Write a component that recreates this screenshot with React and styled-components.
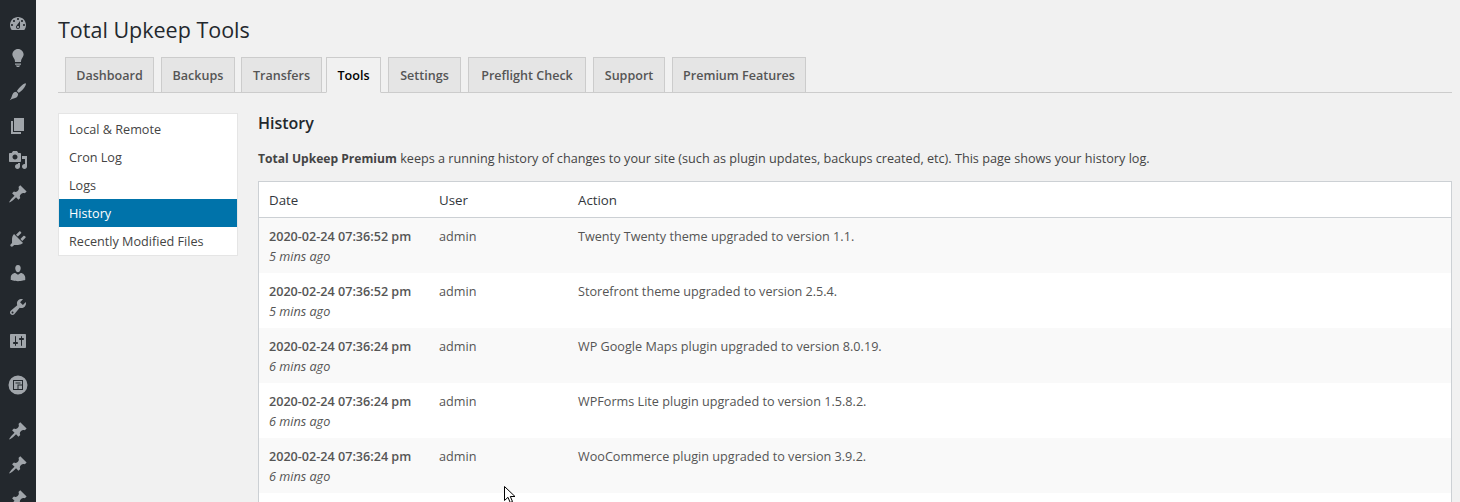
import React from "react";
import styled, { createGlobalStyle } from "styled-components";

const FONT = `"Open Sans", "Noto Sans", "Liberation Sans", sans-serif`;

const Global = createGlobalStyle`
  html, body { margin: 0; padding: 0; height: 502px; overflow: hidden; background: #f1f1f1; }
  body { font-family: ${FONT}; font-size: 12.65px; color: #444; }
  * { box-sizing: border-box; }
`;

const Page = styled.div`
  display: flex;
  width: 1460px;
  height: 502px;
  overflow: hidden;
  position: relative;
`;

const AdminBar = styled.nav`
  flex: none;
  width: 36px;
  height: 502px;
  overflow: hidden;
  background: #23282d;
  padding-top: 7px;
  display: flex;
  flex-direction: column;
  align-items: center;
`;

const MenuIcon = styled.div`
  flex: none;
  height: 34px;
  width: 36px;
  margin-top: ${(p) => p.$gap || 0}px;
  display: flex;
  align-items: center;
  justify-content: center;
  color: #a0a5aa;
  svg { width: 20px; height: 20px; fill: currentColor; display: block; }
`;

const Wrap = styled.main`
  flex: 1;
  min-width: 0;
  padding: 0 8px 0 22px;
`;

const Title = styled.h1`
  margin: 0;
  height: 57px;
  padding-top: 14px;
  font-size: 21.5px;
  line-height: 32px;
  font-weight: 400;
  color: #23282d;
`;

const TabBar = styled.div`
  display: flex;
  height: 36px;
  padding-left: 7px;
  border-bottom: 1px solid #ccc;
`;

const Tab = styled.a`
  flex: none;
  width: ${(p) => p.$w}px;
  margin-right: ${(p) => p.$mr}px;
  display: flex;
  align-items: center;
  justify-content: center;
  padding-top: 1px;
  font-size: 12.55px;
  font-weight: 600;
  border: 1px solid #ccc;
  border-bottom: ${(p) => (p.$active ? "1px solid #f1f1f1" : "none")};
  background: ${(p) => (p.$active ? "#f1f1f1" : "#e5e5e5")};
  color: ${(p) => (p.$active ? "#000" : "#555")};
  height: ${(p) => (p.$active ? "36px" : "35px")};
`;

const Columns = styled.div`
  display: flex;
  gap: 20px;
  padding-top: 20px;
`;

const SideNav = styled.ul`
  flex: none;
  width: 180px;
  height: 143px;
  margin: 0;
  padding: 1px 0 0;
  list-style: none;
  background: #fff;
  border: 1px solid #e5e5e5;
`;

const SideItem = styled.li`
  height: 28px;
  padding-left: 10px;
  line-height: 29px;
  color: ${(p) => (p.$active ? "#fff" : "#444")};
  background: ${(p) => (p.$active ? "#0073aa" : "transparent")};
`;

const Content = styled.section`
  flex: 1;
  min-width: 0;
`;

const Heading = styled.h2`
  margin: 0;
  font-size: 16px;
  line-height: 20px;
  font-weight: 600;
  color: #23282d;
`;

const Intro = styled.p`
  margin: 15px 0 13px;
  line-height: 21px;
  height: 20px;
  strong { font-weight: 700; font-size: 12.1px; }
`;

const Table = styled.table`
  width: 100%;
  border-collapse: separate;
  border-spacing: 0;
  table-layout: fixed;
  background: #fff;
  border: 1px solid #ccd0d4;
`;

const Th = styled.th`
  width: ${(p) => p.$w || "auto"};
  height: 36px;
  padding: 0 10px 0;
  text-align: left;
  font-size: 13.3px;
  font-weight: 400;
  color: #32373c;
  border-bottom: 1px solid #ccd0d4;
`;

const Row = styled.tr`
  background: ${(p) => (p.$alt ? "#f9f9f9" : "#fff")};
`;

const Td = styled.td`
  height: 55px;
  padding: 9px 10px 7px;
  line-height: 19.5px;
  vertical-align: top;
  color: #555;
  strong { font-weight: 600; color: #555; font-size: 12.6px; }
  em { display: block; font-style: italic; color: #555; }
`;

const Cursor = styled.svg`
  position: absolute;
  left: 504px;
  top: 486px;
  width: 12px;
  height: 17px;
`;

const ICONS = {
  dashboard: "M3.76 16h12.48c1.1-1.37 1.76-3.11 1.76-5 0-4.42-3.58-8-8-8s-8 3.58-8 8c0 1.89.66 3.63 1.76 5zM10 4c.55 0 1 .45 1 1s-.45 1-1 1-1-.45-1-1 .45-1 1-1zM6 6c.55 0 1 .45 1 1s-.45 1-1 1-1-.45-1-1 .45-1 1-1zm8 0c.55 0 1 .45 1 1s-.45 1-1 1-1-.45-1-1 .45-1 1-1zm-5.37 5.55L12 7v6c0 1.1-.9 2-2 2s-2-.9-2-2c0-.57.24-1.08.63-1.45zM4 10c.55 0 1 .45 1 1s-.45 1-1 1-1-.45-1-1 .45-1 1-1zm12 0c.55 0 1 .45 1 1s-.45 1-1 1-1-.45-1-1 .45-1 1-1zm-5 3c0-.55-.45-1-1-1s-1 .45-1 1 .45 1 1 1 1-.45 1-1z",
  bulb: "M10 1c3.11 0 5.63 2.52 5.63 5.62 0 1.62-1.5 3.67-2.1 4.52-.5.76-.53 2.86-.53 2.86H7s-.03-2.1-.53-2.86C5.87 10.29 4.37 8.24 4.37 6.62 4.37 3.52 6.89 1 10 1zM7 15.5h6v1.2H7zM7.6 17.4h4.8L11 19H9z",
  brush: "M17.8 1.4c.6.5-.6 3.2-2.6 5.5-1.5 1.7-3.2 3.2-4.6 3.9L8.9 9.1c.7-1.4 2.3-3.4 4-4.9 2-1.8 4.4-3.2 4.9-2.8zM8.2 9.8l1.9 1.9c.1 1.4-.5 2.9-1.7 3.7-1.6 1.1-3.6.5-6.6 2.9 2-2.8 2-4.900 2.900-6.400.7-1.300 2.100-2.100 3.500-2.100z",
  page: "M6 15V2h10v13H6zm-1 1h8v2H3V5h2v11z",
  media: "M13 11V4c0-.55-.45-1-1-1h-1.67L9 1H5L3.67 3H2c-.55 0-1 .45-1 1v7c0 .55.45 1 1 1h10c.55 0 1-.45 1-1zM7 4.5c1.38 0 2.5 1.12 2.5 2.5S8.38 9.5 7 9.5 4.5 8.38 4.5 7 5.62 4.5 7 4.5zM14 6h5v10.5c0 1.38-1.12 2.5-2.5 2.5S14 17.88 14 16.5s1.12-2.5 2.5-2.5c.17 0 .34.02.5.05V9h-3V6zm-4 8.05V13h2v3.5c0 1.38-1.12 2.5-2.5 2.5S7 17.88 7 16.5 8.12 14 9.5 14c.17 0 .34.02.5.05z",
  pin: "M10.44 3.02l1.82-1.82 6.36 6.35-1.83 1.82c-1.05-.68-2.48-.57-3.41.36l-.75.75c-.92.93-1.04 2.35-.35 3.41l-1.83 1.82-2.41-2.41-2.8 2.79c-.42.42-3.38 2.71-3.8 2.29s1.86-3.39 2.28-3.81l2.79-2.79L4.1 9.36l1.83-1.82c1.05.69 2.48.57 3.4-.36l.75-.75c.93-.92 1.05-2.35.36-3.41z",
  plugin: "M13.11 4.36L9.87 7.6 8 5.73l3.24-3.24c.35-.34 1.05-.2 1.56.32.52.51.66 1.21.31 1.55zm-8 1.77l.91-1.12 9.01 9.01-1.19.84c-.71.71-2.63 1.16-3.82 1.16H6.14L4.9 17.26c-.59.59-1.54.59-2.12 0-.59-.58-.59-1.53 0-2.12l1.24-1.24v-3.88c0-1.13.4-3.19 1.09-3.89zm7.26 3.97l3.24-3.24c.34-.35 1.04-.21 1.55.31.52.51.66 1.21.31 1.55l-3.24 3.25z",
  user: "M10 9.25c-2.27 0-2.73-3.44-2.73-3.44C7 4.02 7.82 2 9.97 2c2.16 0 2.98 2.02 2.71 3.81 0 0-.41 3.44-2.68 3.44zm0 2.57L12.72 10c2.39 0 4.52 2.33 4.52 4.53v2.49s-3.65 1.13-7.24 1.13c-3.65 0-7.24-1.13-7.24-1.13v-2.49c0-2.25 1.94-4.48 4.47-4.48z",
  tools: "M16.68 9.77c-1.34 1.34-3.3 1.67-4.95.99l-5.41 6.52c-.99.99-2.59.99-3.58 0s-.99-2.59 0-3.57l6.52-5.42c-.68-1.65-.35-3.61.99-4.95 1.28-1.28 3.12-1.62 4.72-1.06l-2.89 2.89 2.82 2.82 2.86-2.87c.53 1.58.18 3.39-1.08 4.65zM3.81 16.21c.4.39 1.04.39 1.43 0 .4-.4.4-1.04 0-1.43-.39-.4-1.03-.4-1.43 0-.39.39-.39 1.03 0 1.43z",
  settings: "M18 16V4c0-.55-.45-1-1-1H3c-.55 0-1 .45-1 1v12c0 .55.45 1 1 1h14c.55 0 1-.45 1-1zM8 11h1c.55 0 1 .45 1 1s-.45 1-1 1H8v1.5c0 .28-.22.5-.5.5s-.5-.22-.5-.5V13H6c-.55 0-1-.45-1-1s.45-1 1-1h1V5.5c0-.28.22-.5.5-.5s.5.22.5.5V11zm5-2h-1c-.55 0-1-.45-1-1s.45-1 1-1h1V5.5c0-.28.22-.5.5-.5s.5.22.5.5V7h1c.55 0 1 .45 1 1s-.45 1-1 1h-1v5.5c0 .28-.22.5-.5.5s-.5-.22-.5-.5V9z",
  logo: "M10 .5a9.5 9.5 0 1 0 0 19 9.5 9.5 0 0 0 0-19zM5 5h10v10H5zm1 1v8h3.5V9.5H14V6zm4.5 4.5V14H14v-3.500zM7.5 7.500h5v1h-5z",
};

const MENU = [
  ["dashboard"], ["bulb"], ["brush"], ["page"], ["media"], ["pin"],
  ["plugin", 11], ["user"], ["tools"], ["settings"],
  ["logo", 10], ["pin", 12], ["pin"], ["pin"],
];

const TABS = [
  ["Dashboard", 89, 7], ["Backups", 74, 6], ["Transfers", 81, 4],
  ["Tools", 55, 7, true], ["Settings", 73, 7], ["Preflight Check", 118, 7],
  ["Support", 72, 7], ["Premium Features", 134, 0],
];

const NAV = ["Local & Remote", "Cron Log", "Logs", "History", "Recently Modified Files"];

const ROWS = [
  ["2020-02-24 07:36:52 pm", "5 mins ago", "Twenty Twenty theme upgraded to version 1.1."],
  ["2020-02-24 07:36:52 pm", "5 mins ago", "Storefront theme upgraded to version 2.5.4."],
  ["2020-02-24 07:36:24 pm", "6 mins ago", "WP Google Maps plugin upgraded to version 8.0.19."],
  ["2020-02-24 07:36:24 pm", "6 mins ago", "WPForms Lite plugin upgraded to version 1.5.8.2."],
  ["2020-02-24 07:36:24 pm", "6 mins ago", "WooCommerce plugin upgraded to version 3.9.2."],
];

export default function App() {
  return (
    <Page>
      <Global />
      <AdminBar>
        {MENU.map(([name, gap], i) => (
          <MenuIcon key={i} $gap={gap}>
            <svg viewBox="0 0 20 20"><path fillRule="evenodd" d={ICONS[name]} /></svg>
          </MenuIcon>
        ))}
      </AdminBar>
      <Wrap>
        <Title>Total Upkeep Tools</Title>
        <TabBar>
          {TABS.map(([label, w, mr, active]) => (
            <Tab key={label} $w={w} $mr={mr} $active={active}>{label}</Tab>
          ))}
        </TabBar>
        <Columns>
          <SideNav>
            {NAV.map((n) => (
              <SideItem key={n} $active={n === "History"}>{n}</SideItem>
            ))}
          </SideNav>
          <Content>
            <Heading>History</Heading>
            <Intro>
              <strong>Total Upkeep Premium</strong> keeps a running history of changes to your site (such as plugin updates, backups created, etc). This page shows your history log.
            </Intro>
            <Table>
              <thead>
                <tr>
                  <Th $w="170px">Date</Th>
                  <Th $w="139px">User</Th>
                  <Th>Action</Th>
                </tr>
              </thead>
              <tbody>
                {ROWS.map(([d, ago, action], i) => (
                  <Row key={i} $alt={i % 2 === 0}>
                    <Td><strong>{d}</strong><em>{ago}</em></Td>
                    <Td>admin</Td>
                    <Td>{action}</Td>
                  </Row>
                ))}
                <Row>
                  <Td />
                  <Td />
                  <Td />
                </Row>
              </tbody>
            </Table>
          </Content>
        </Columns>
      </Wrap>
      <Cursor viewBox="0 0 12 17">
        <path d="M.5.5v14l3.5-3.2 2.2 5.2 2.3-1-2.2-5h4.7z" fill="#fff" stroke="#000" strokeWidth="1" />
      </Cursor>
    </Page>
  );
}
